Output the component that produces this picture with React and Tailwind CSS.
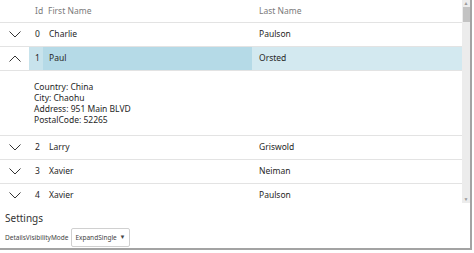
import React from "react";

const font = { fontFamily: '"Noto Sans", "Open Sans", sans-serif' };

function Chevron({ up }) {
  return (
    <svg width="12" height="7" viewBox="0 0 12 7" className="block">
      {up ? (
        <polyline points="0.5,6.5 6,1 11.5,6.5" fill="none" stroke="#333" strokeWidth="1" />
      ) : (
        <polyline points="0.5,0.5 6,6 11.5,0.5" fill="none" stroke="#333" strokeWidth="1" />
      )}
    </svg>
  );
}

const rows = [
  { id: 0, first: "Charlie", last: "Paulson" },
  { id: 1, first: "Paul", last: "Orsted", open: true },
  { id: 2, first: "Larry", last: "Griswold" },
  { id: 3, first: "Xavier", last: "Neiman" },
  { id: 4, first: "Xavier", last: "Paulson" },
];

function Row({ r }) {
  const sel = r.open;
  return (
    <div className="flex h-[24px] border-b border-[#e3e3e3] text-[8.5px] text-[#262626] shrink-0">
      <div className="w-[29px] flex items-center justify-center pl-[1px]">
        <Chevron up={sel} />
      </div>
      <div className={`w-[14px] flex items-center pl-[6px] ${sel ? "bg-[#c8e3ec]" : ""}`}>{r.id}</div>
      <div className={`w-[209px] flex items-center pl-[6px] ${sel ? "bg-[#b5dae7]" : ""}`}>{r.first}</div>
      <div className={`flex-1 flex items-center pl-[7px] ${sel ? "bg-[#d3e9f0]" : ""}`}>{r.last}</div>
    </div>
  );
}

export default function App() {
  return (
    <div className="w-[474px] h-[253px] bg-white overflow-hidden" style={font}>
      <div className="w-[472px] h-[250px] border-r-2 border-b-2 border-[#a3a3a3] flex flex-col">
        <div className="flex h-[203px] shrink-0">
          <div className="flex-1 flex flex-col overflow-hidden">
            <div className="flex h-[23px] border-b border-[#e3e3e3] text-[8.5px] text-[#7a7a7a] shrink-0">
              <div className="w-[29px]" />
              <div className="w-[14px] flex items-center pl-[6px]">Id</div>
              <div className="w-[209px] flex items-center pl-[5px]">First Name</div>
              <div className="flex-1 flex items-center pl-[7px]">Last Name</div>
            </div>
            <Row r={rows[0]} />
            <Row r={rows[1]} />
            <div className="h-[65px] border-b border-[#e3e3e3] pl-[34px] pt-[10px] text-[8.5px] leading-[11px] text-[#262626] shrink-0">
              <div className="h-[11px]">Country: China</div>
              <div className="h-[11px]">City: Chaohu</div>
              <div className="h-[11px]">Address: 951 Main BLVD</div>
              <div className="h-[11px]">PostalCode: 52265</div>
            </div>
            <Row r={rows[2]} />
            <Row r={rows[3]} />
            <Row r={rows[4]} />
          </div>
          <div className="w-[8px] bg-[#ececec] flex flex-col items-center relative">
            <div className="text-[5px] leading-[6px] text-[#9a9a9a] h-[7px]">▲</div>
            <div className="w-[7px] h-[15px] bg-[#c3c3c3]" />
            <div className="flex-1" />
            <div className="text-[5px] leading-[6px] text-[#9a9a9a] h-[8px] pt-[1px]">▼</div>
          </div>
        </div>
        <div className="pl-[5px] pt-[8px] flex-1">
          <div className="text-[10px] leading-[14px] text-[#333]">Settings</div>
          <div className="flex items-center mt-[3px] gap-[3px]">
            <span className="text-[6.5px] text-[#444]">DetailsVisibilityMode</span>
            <div className="h-[19px] w-[59px] border border-[#d0d0d0] rounded-[2px] flex items-center pl-[3px] pr-[4px] justify-between text-[6.5px] text-[#444]">
              <span>ExpandSingle</span>
              <span className="text-[6px]">▼</span>
            </div>
          </div>
        </div>
      </div>
    </div>
  );
}
